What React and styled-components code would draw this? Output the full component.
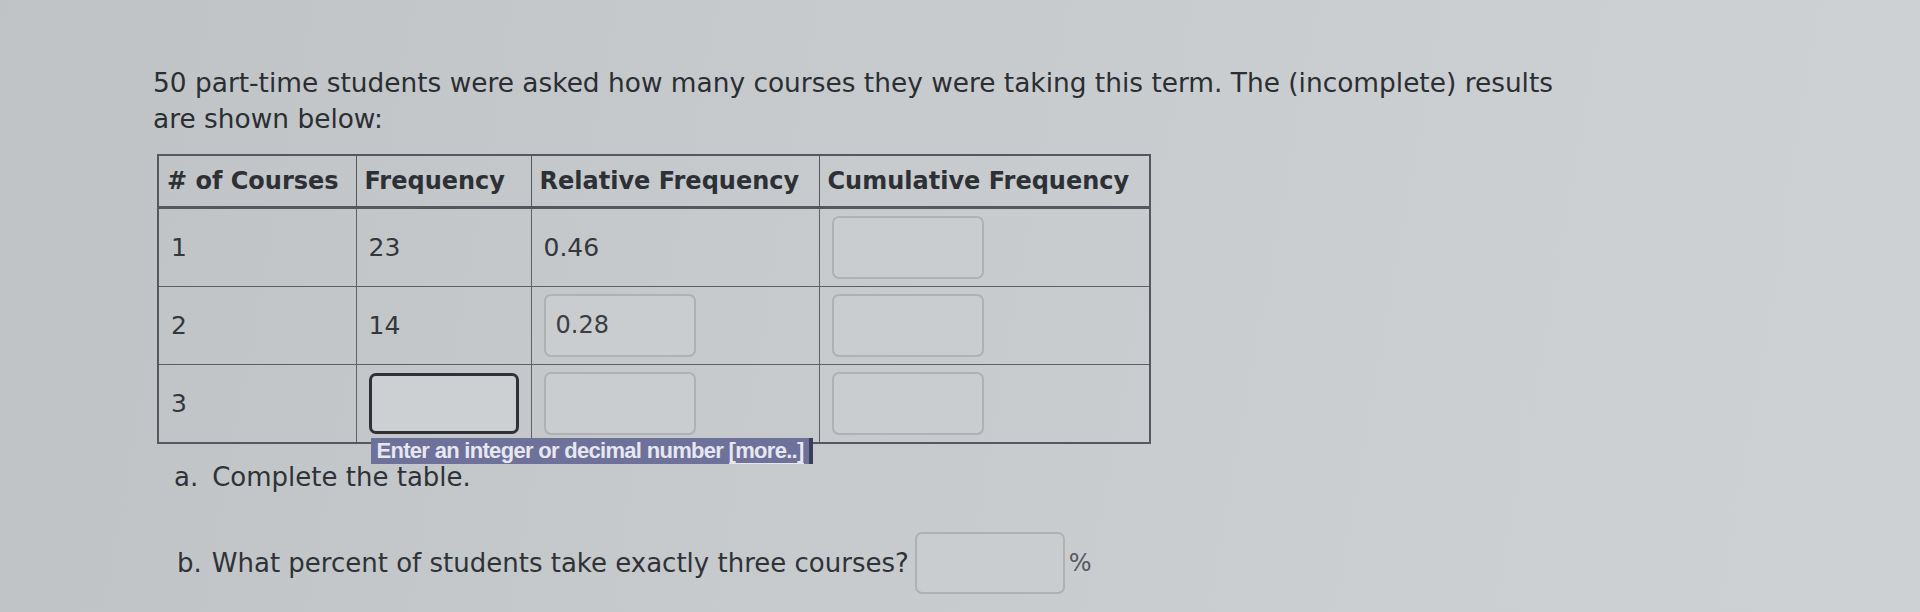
import React from 'react';
import styled, { createGlobalStyle } from 'styled-components';

const GlobalStyle = createGlobalStyle`
  html, body {
    margin: 0;
    padding: 0;
  }
  body {
    width: 1920px;
    height: 612px;
    overflow: hidden;
    background: linear-gradient(100deg, #bfc3c6 0%, #c6cacd 40%, #cbcfd2 75%, #cdd1d4 100%);
    font-family: "DejaVu Sans", "Liberation Sans", sans-serif;
    color: #2b2e33;
  }
`;

const Page = styled.div`
  padding: 65px 0 0 153px;
`;

const Prompt = styled.p`
  margin: 0;
  width: 1420px;
  font-size: 26.4px;
  line-height: 36px;
`;

const Table = styled.table`
  margin: 17px 0 0 4px;
  border-collapse: collapse;
  table-layout: fixed;
  width: 992px;
  border: 2px solid #55595e;
`;

const HeadCell = styled.th`
  box-sizing: border-box;
  width: ${({ w }) => w}px;
  height: 52px;
  padding: 0 8px;
  text-align: left;
  font-weight: 700;
  font-size: 24px;
  white-space: nowrap;
  border: 1.5px solid #55595e;
  border-bottom-width: 3px;
  color: #2d3035;
`;

const Cell = styled.td`
  height: 77px;
  padding: 0 12px;
  font-size: 25px;
  border: 1.5px solid #5d6166;
  color: #34373c;
  vertical-align: middle;
`;

const InputWrap = styled.div`
  position: relative;
  display: inline-block;
`;

const Box = styled.input`
  box-sizing: border-box;
  width: ${({ w }) => w || 152}px;
  height: ${({ h }) => h || 63}px;
  margin-left: ${({ ml }) => ml || 0}px;
  border: ${({ focused }) => (focused ? '3px solid #2e3136' : '2px solid #aeb2b5')};
  border-radius: 7px;
  background: ${({ focused }) => (focused ? '#ccd0d3' : '#c9cdd0')};
  font-family: inherit;
  font-size: 24px;
  color: #3b3e43;
  padding: 0 10px;
  outline: none;
`;

const Tip = styled.div`
  position: absolute;
  left: 2px;
  top: calc(100% + 4px);
  white-space: nowrap;
  background: #6e7199;
  color: #e6e7f0;
  font-family: "Liberation Sans", sans-serif;
  font-weight: 700;
  font-size: 22px;
  letter-spacing: -0.7px;
  line-height: 26px;
  padding: 0 5px 0 6px;
  border-right: 4px solid #3b3e5a;
  z-index: 2;

  span {
    border-bottom: 1px solid #e6e7f0;
  }
`;

const Part = styled.div`
  display: flex;
  align-items: center;
  margin: ${({ m }) => m};
  font-size: 26px;
  color: #2f3237;
`;

const Label = styled.span`
  margin-right: ${({ gap }) => gap}px;
`;

const Unit = styled.span`
  margin-left: 4px;
  font-size: 24px;
  color: #55585d;
`;

const cols = [
  ['# of Courses', 198],
  ['Frequency', 175],
  ['Relative Frequency', 288],
  ['Cumulative Frequency', 331],
];

const App = () => {
  return (
    <>
      <GlobalStyle />
      <Page>
        <Prompt>
          50 part-time students were asked how many courses they were taking this term. The (incomplete) results are shown below:
        </Prompt>
        <Table>
          <thead>
            <tr>
              {cols.map(([t, w]) => (
                <HeadCell key={t} w={w}>{t}</HeadCell>
              ))}
            </tr>
          </thead>
          <tbody>
            <tr>
              <Cell>1</Cell>
              <Cell>23</Cell>
              <Cell>0.46</Cell>
              <Cell><Box readOnly /></Cell>
            </tr>
            <tr>
              <Cell>2</Cell>
              <Cell>14</Cell>
              <Cell><Box readOnly defaultValue="0.28" /></Cell>
              <Cell><Box readOnly /></Cell>
            </tr>
            <tr>
              <Cell>3</Cell>
              <Cell>
                <InputWrap>
                  <Box readOnly focused w={150} h={61} />
                  <Tip>Enter an integer or decimal number <span>[more..]</span></Tip>
                </InputWrap>
              </Cell>
              <Cell><Box readOnly /></Cell>
              <Cell><Box readOnly /></Cell>
            </tr>
          </tbody>
        </Table>
        <Part m="18px 0 0 21px">
          <Label gap={14}>a.</Label> Complete the table.
        </Part>
        <Part m="40px 0 0 24px">
          <Label gap={10}>b.</Label> What percent of students take exactly three courses?
          <Box readOnly w={150} h={62} ml={6} />
          <Unit>%</Unit>
        </Part>
      </Page>
    </>
  );
};

export default App;
